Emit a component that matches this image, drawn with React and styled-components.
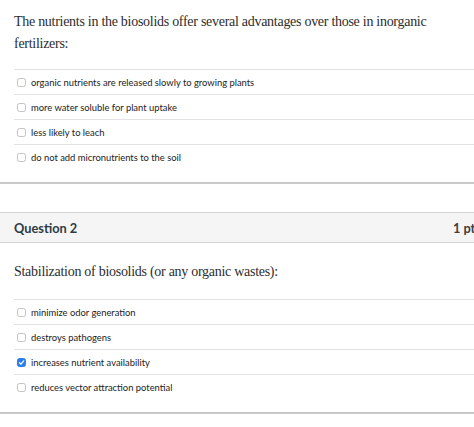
import React from 'react';
import styled, { createGlobalStyle } from 'styled-components';

const GlobalStyle = createGlobalStyle`
  html, body {
    margin: 0;
    padding: 0;
    background: #fff;
  }
  * {
    box-sizing: border-box;
  }
`;

const Page = styled.div`
  width: 474px;
  height: 427px;
  overflow: hidden;
  background: #fff;
`;

const Card = styled.div`
  width: 495px;
  border-bottom: 2px solid #c8c8c8;
  margin-top: ${props => props.gap || 0}px;
`;

const Header = styled.div`
  height: 31px;
  display: flex;
  align-items: center;
  justify-content: space-between;
  padding: 0 14px;
  background: #f5f5f5;
  border-top: 1px solid #d2d2d2;
  border-bottom: 1px solid #d2d2d2;
  font-family: Lato, 'Open Sans', sans-serif;
  font-weight: 700;
  font-size: 12.8px;
  color: #2d3b45;
`;

const Points = styled.span`
  color: #3d3d3d;
`;

const Body = styled.div`
  padding: ${props => props.top}px 0 13px 14px;
`;

const Prompt = styled.p`
  margin: 0 0 ${props => props.after}px;
  font-family: 'Liberation Serif', 'Times New Roman', serif;
  font-size: 14px;
  letter-spacing: -0.28px;
  line-height: 22px;
  color: #2d2d2d;
`;

const Answers = styled.ul`
  list-style: none;
  margin: 0;
  padding: 0;
`;

const Answer = styled.li`
  height: 25px;
  display: flex;
  align-items: center;
  gap: 5px;
  padding-left: 3px;
  border-top: 1px solid #e3e3e3;
  font-family: Lato, 'Open Sans', sans-serif;
  font-size: 9.4px;
  color: #222;
`;

const Box = styled.span`
  width: 9px;
  height: 9px;
  flex: none;
  border-radius: 2.5px;
  border: 1px solid ${props => (props.checked ? '#2b7de9' : '#c2c2c2')};
  background: ${props => (props.checked ? '#2b7de9' : '#fff')};
  display: flex;
  align-items: center;
  justify-content: center;
`;

const Check = () => (
  <svg width="7" height="7" viewBox="0 0 10 10">
    <path d="M2 5.2 L4.2 7.4 L8.2 2.8" fill="none" stroke="#fff" strokeWidth="1.8" strokeLinecap="round" strokeLinejoin="round" />
  </svg>
);

const AnswerRow = ({ text, checked }) => (
  <Answer>
    <Box checked={checked}>{checked && <Check />}</Box>
    <span>{text}</span>
  </Answer>
);

const questions = [
  {
    answers: [
      'organic nutrients are released slowly to growing plants',
      'more water soluble for plant uptake',
      'less likely to leach',
      'do not add micronutrients to the soil'
    ],
    checked: -1
  },
  {
    title: 'Question 2',
    points: '1 pts',
    prompt: 'Stabilization of biosolids (or any organic wastes):',
    answers: [
      'minimize odor generation',
      'destroys pathogens',
      'increases nutrient availability',
      'reduces vector attraction potential'
    ],
    checked: 2
  }
];

const App = () => (
  <Page>
    <GlobalStyle />
    <Card>
      <Body top={11}>
        <Prompt after={14}>
          The nutrients in the biosolids offer several advantages over those in inorganic
          <br />
          fertilizers:
        </Prompt>
        <Answers>
          {questions[0].answers.map((a, i) => (
            <AnswerRow key={a} text={a} checked={i === questions[0].checked} />
          ))}
        </Answers>
      </Body>
    </Card>
    <Card gap={28}>
      <Header>
        <span>{questions[1].title}</span>
        <Points>{questions[1].points}</Points>
      </Header>
      <Body top={18}>
        <Prompt after={16}>{questions[1].prompt}</Prompt>
        <Answers>
          {questions[1].answers.map((a, i) => (
            <AnswerRow key={a} text={a} checked={i === questions[1].checked} />
          ))}
        </Answers>
      </Body>
    </Card>
  </Page>
);

export default App;
